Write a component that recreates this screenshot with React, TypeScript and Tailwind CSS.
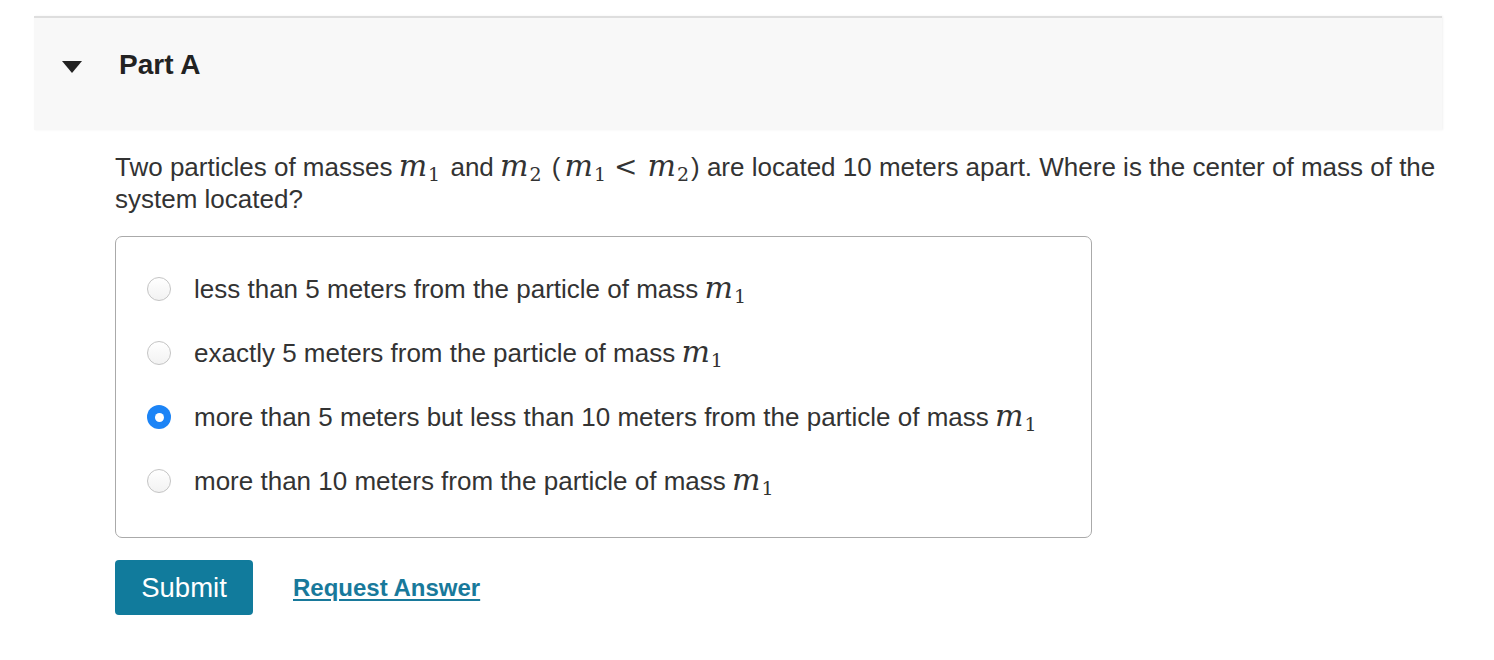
const sans = "font-['Liberation_Sans',Arial,sans-serif]"

function M({ sub, tight }: { sub: string; tight?: boolean }) {
  return (
    <span className={`inline-block whitespace-nowrap ${tight ? 'ml-[4px] mr-[2px]' : 'ml-[-1px] mr-[3px]'}`}>
      <span className="font-['DejaVu_Serif',serif] italic text-[30px] leading-none">m</span>
      <span className="font-['DejaVu_Serif',serif] text-[19px] leading-none relative top-[5px] ml-[1px]">{sub}</span>
    </span>
  )
}

function Radio({ checked }: { checked?: boolean }) {
  if (checked) {
    return (
      <span className="w-6 h-6 rounded-full bg-[#1c84f6] flex items-center justify-center shrink-0">
        <span className="w-[9px] h-[9px] rounded-full bg-white" />
      </span>
    )
  }
  return <span className="w-6 h-6 rounded-full border border-[#c4c4c4] bg-gradient-to-b from-white to-[#f2f2f2] shrink-0" />
}

const options = [
  { text: 'less than 5 meters from the particle of mass', checked: false },
  { text: 'exactly 5 meters from the particle of mass', checked: false },
  { text: 'more than 5 meters but less than 10 meters from the particle of mass', checked: true },
  { text: 'more than 10 meters from the particle of mass', checked: false },
]

export default function App() {
  return (
    <div className={`${sans} bg-white min-h-[660px] pt-4 text-[#333]`}>
      <div className="mx-[34px] w-[1408px]">
        {/* Part header */}
        <div className="h-[114px] bg-[#f8f8f8] border-t-2 border-[#dedede] shadow-[1px_0_2px_rgba(0,0,0,0.06)] flex items-start pt-[31px]">
          <svg className="ml-[28px] w-5 h-3 mt-[12px]" viewBox="0 0 20 12">
            <path d="M0 0 L20 0 L10 12 Z" fill="#222" />
          </svg>
          <h2 className="ml-[37px] text-[28px] leading-[32px] font-bold text-[#222]">Part A</h2>
        </div>

        <div className="pl-[81px]">
          <p className="mt-[21px] text-[26px] leading-[32px]">
            Two particles of masses <M sub="1" /> and <M sub="2" /> (<M sub="1" tight /><span className="font-['DejaVu_Serif',serif] text-[28px] mx-[6px]">&lt;</span><M sub="2" tight />) are located 10 meters apart. Where is the center of mass of the system located?
          </p>

          <div className="mt-[21px] w-[977px] border-[1.5px] border-[#aaaaaa] rounded-[7px] pt-[20px] pb-[24px]">
            {options.map((o, i) => (
              <label key={i} className="h-16 flex items-center pl-[31px]">
                <Radio checked={o.checked} />
                <span className="ml-[23px] text-[26px] text-[#333]">
                  {o.text} <M sub="1" />
                </span>
              </label>
            ))}
          </div>

          <div className="mt-[22px] flex items-center">
            <button className="w-[138px] h-[55px] bg-[#117b9c] rounded-[4px] text-white text-[27.5px]">
              Submit
            </button>
            <a href="#" className="ml-10 text-[24px] font-bold text-[#18799b] underline underline-offset-[3px]">
              Request Answer
            </a>
          </div>
        </div>
      </div>
    </div>
  )
}
